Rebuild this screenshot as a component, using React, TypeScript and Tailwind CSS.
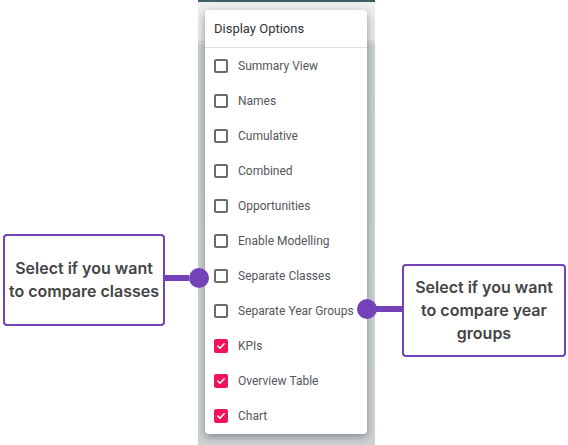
import React from "react";

const options = [
  { label: "Summary View", checked: false },
  { label: "Names", checked: false },
  { label: "Cumulative", checked: false },
  { label: "Combined", checked: false },
  { label: "Opportunities", checked: false },
  { label: "Enable Modelling", checked: false },
  { label: "Separate Classes", checked: false },
  { label: "Separate Year Groups", checked: false },
  { label: "KPIs", checked: true },
  { label: "Overview Table", checked: true },
  { label: "Chart", checked: true },
];

function Box({ checked }: { checked: boolean }) {
  if (checked) {
    return (
      <span className="flex h-[14px] w-[14px] items-center justify-center rounded-[2px] bg-[#f0145a]">
        <svg viewBox="0 0 12 12" className="h-[10px] w-[10px]" fill="none">
          <path d="M2.2 6.2 L4.8 8.6 L9.8 3.4" stroke="#fff" strokeWidth="1.8" strokeLinecap="round" strokeLinejoin="round" />
        </svg>
      </span>
    );
  }
  return <span className="block h-[14px] w-[14px] rounded-[2px] border-2 border-[#6b6b6b]" />;
}

export default function App() {
  return (
    <div className="flex h-[445px] w-[568px] overflow-hidden bg-white font-['Roboto',sans-serif]">
      {/* left callout */}
      <div className="w-[198px] shrink-0 pt-[234px] pl-[3px]">
        <div className="relative flex h-[92px] w-[162px] items-center justify-center rounded-[4px] border-2 border-[#7442b8] bg-white">
          <p className="text-center font-['Inter',sans-serif] text-[16px] font-semibold leading-[23px] text-[#444]">
            Select if you want
            <br />
            to compare classes
          </p>
          <div className="absolute left-full top-[32px] z-10 flex items-center">
            <div className="h-[6px] w-[26px] bg-[#7442b8]" />
            <div className="h-[20px] w-[20px] rounded-full bg-[#7442b8]" />
          </div>
        </div>
      </div>

      {/* dropdown strip */}
      <div className="w-[177px] shrink-0 bg-[linear-gradient(to_bottom,#3d5f66_0px,#3d5f66_2px,#eef0f0_2px,#e4e7e8_40px,#d5dadc_41px,#d5dadc_44px,#cad1d3_44px,#cdd3d5_100%)] pl-[7px] pt-[10px]">
        <div className="h-[424px] w-[162px] rounded-[4px] bg-white shadow-[0_3px_8px_rgba(0,0,0,0.35)]">
          <div className="flex h-[38px] items-center border-b border-[#dedede] pl-[9px] text-[13px] text-[#333]">
            Display Options
          </div>
          <ul>
            {options.map((o) => (
              <li key={o.label} className="flex h-[35px] items-center gap-[10px] pl-[9px] text-[12px] text-[#55565c]">
                <Box checked={o.checked} />
                <span>{o.label}</span>
              </li>
            ))}
          </ul>
        </div>
      </div>

      {/* right callout */}
      <div className="pt-[264px] pl-[27px]">
        <div className="relative flex h-[93px] w-[164px] items-center justify-center rounded-[4px] border-2 border-[#7442b8] bg-white">
          <p className="text-center font-['Inter',sans-serif] text-[16px] font-semibold leading-[23px] text-[#444]">
            Select if you want
            <br />
            to compare year
            <br />
            groups
          </p>
          <div className="absolute right-full top-[33px] z-10 flex items-center">
            <div className="h-[20px] w-[20px] rounded-full bg-[#7442b8]" />
            <div className="-ml-[2px] h-[6px] w-[29px] bg-[#7442b8]" />
          </div>
        </div>
      </div>
    </div>
  );
}
